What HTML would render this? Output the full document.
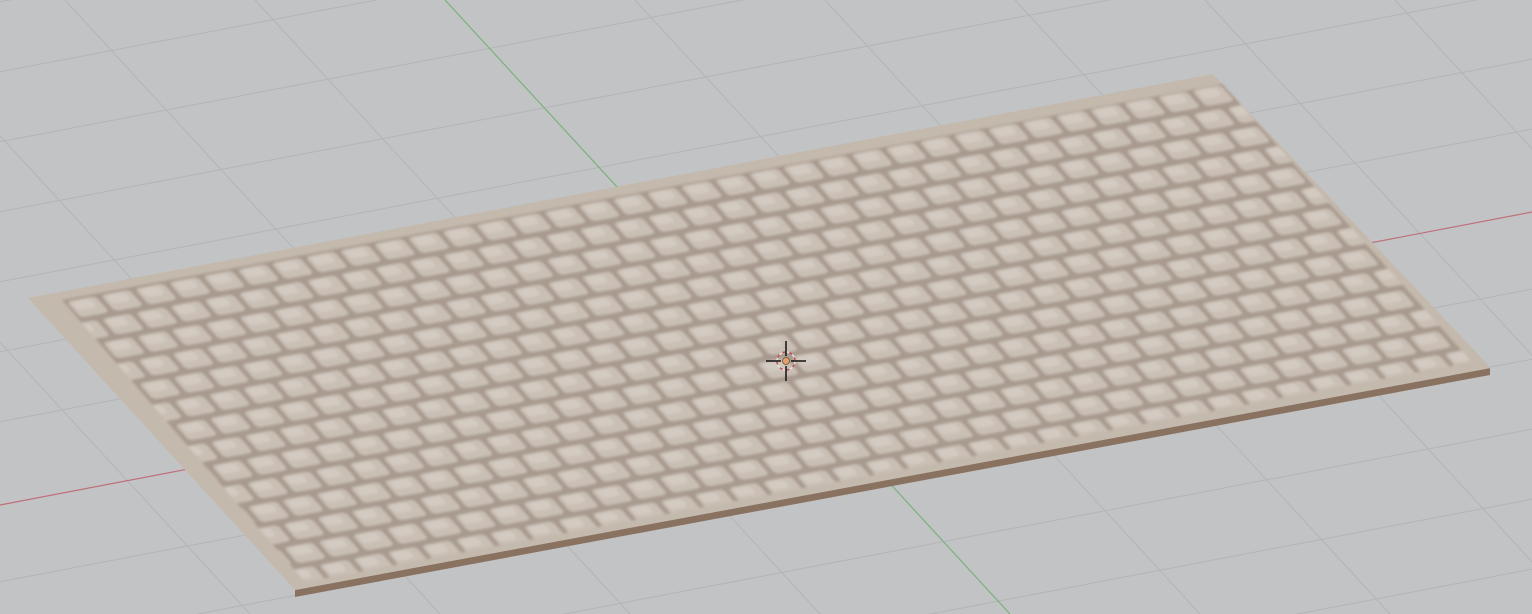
<!DOCTYPE html>
<html><head><meta charset="utf-8"><style>html,body{margin:0;padding:0;background:#c2c3c5;overflow:hidden;width:1532px;height:614px}svg{display:block;position:absolute;top:0;left:0}</style></head><body>
<svg width="1532" height="614" viewBox="0 0 1532 614" xmlns="http://www.w3.org/2000/svg">
<defs>
<pattern id="cob" patternUnits="userSpaceOnUse" width="1" height="2" patternTransform="matrix(34.1,-6.4,18.1,20.5,62,300)">
<rect width="1" height="2" fill="#a89a8e"/>
<rect x="0.08" y="0.1" width="0.84" height="0.78" rx="0.14" fill="#c9bfb5"/>
<rect x="0.18" y="0.16" width="0.55" height="0.4" rx="0.12" fill="#d3cac1"/>
<rect x="0.58" y="1.1" width="0.84" height="0.78" rx="0.14" fill="#c9bfb5"/>
<rect x="-0.42" y="1.1" width="0.84" height="0.78" rx="0.14" fill="#c9bfb5"/>
<rect x="0.66" y="1.16" width="0.5" height="0.4" rx="0.12" fill="#d3cac1"/>
<rect x="-0.34" y="1.16" width="0.5" height="0.4" rx="0.12" fill="#d3cac1"/>
</pattern>
<filter id="bl" x="-5%" y="-5%" width="110%" height="110%"><feGaussianBlur stdDeviation="1.3"/></filter>
<clipPath id="c"><rect width="1532" height="614"/></clipPath>
</defs>
<g stroke="#b3b4b6" stroke-width="1" clip-path="url(#c)">
<line x1="-200" y1="-30" x2="1800" y2="-412"/>
<line x1="-200" y1="40" x2="1800" y2="-342"/>
<line x1="-200" y1="110" x2="1800" y2="-272"/>
<line x1="-200" y1="180" x2="1800" y2="-202"/>
<line x1="-200" y1="250" x2="1800" y2="-132"/>
<line x1="-200" y1="320" x2="1800" y2="-62"/>
<line x1="-200" y1="390" x2="1800" y2="8"/>
<line x1="-200" y1="460" x2="1800" y2="78"/>
<line x1="-200" y1="620" x2="1800" y2="238"/>
<line x1="-200" y1="690" x2="1800" y2="308"/>
<line x1="-200" y1="760" x2="1800" y2="378"/>
<line x1="-200" y1="830" x2="1800" y2="448"/>
<line x1="-200" y1="900" x2="1800" y2="518"/>
<line x1="-200" y1="970" x2="1800" y2="588"/>
<line x1="-200" y1="1040" x2="1800" y2="658"/>
<line x1="-315" y1="0" x2="250" y2="614"/>
<line x1="-125" y1="0" x2="440" y2="614"/>
<line x1="65" y1="0" x2="630" y2="614"/>
<line x1="255" y1="0" x2="820" y2="614"/>
<line x1="635" y1="0" x2="1200" y2="614"/>
<line x1="825" y1="0" x2="1390" y2="614"/>
<line x1="1015" y1="0" x2="1580" y2="614"/>
<line x1="1205" y1="0" x2="1770" y2="614"/>
<line x1="1395" y1="0" x2="1960" y2="614"/>
</g>
<line x1="0" y1="505" x2="1532" y2="212" stroke="#c0707a" stroke-width="1.2"/>
<line x1="445" y1="0" x2="1010" y2="614" stroke="#7cb07c" stroke-width="1.2"/>
<polygon points="295,590 1490,368 1490,375 295,597" fill="#8a7261"/>
<polygon points="28,298 1213,74 1491,368 295,590" fill="#c4b9ad"/>
<polygon points="62,300 1222,84 1472,362 305,582" fill="url(#cob)" filter="url(#bl)"/>
<g transform="translate(786,361)">
<circle r="9" fill="none" stroke="#e8e0dc" stroke-width="1.5" stroke-dasharray="4 3"/>
<circle r="9" fill="none" stroke="#c05050" stroke-width="1.5" stroke-dasharray="3 4" stroke-dashoffset="3.5"/>
<line x1="-20" y1="0" x2="-5" y2="0" stroke="#111" stroke-width="1.5"/>
<line x1="5" y1="0" x2="20" y2="0" stroke="#111" stroke-width="1.5"/>
<line x1="0" y1="-20" x2="0" y2="-5" stroke="#111" stroke-width="1.5"/>
<line x1="0" y1="5" x2="0" y2="20" stroke="#111" stroke-width="1.5"/>
<circle r="3.5" fill="#e0a070" stroke="#705030" stroke-width="0.8"/>
</g>
</svg>
</body></html>
